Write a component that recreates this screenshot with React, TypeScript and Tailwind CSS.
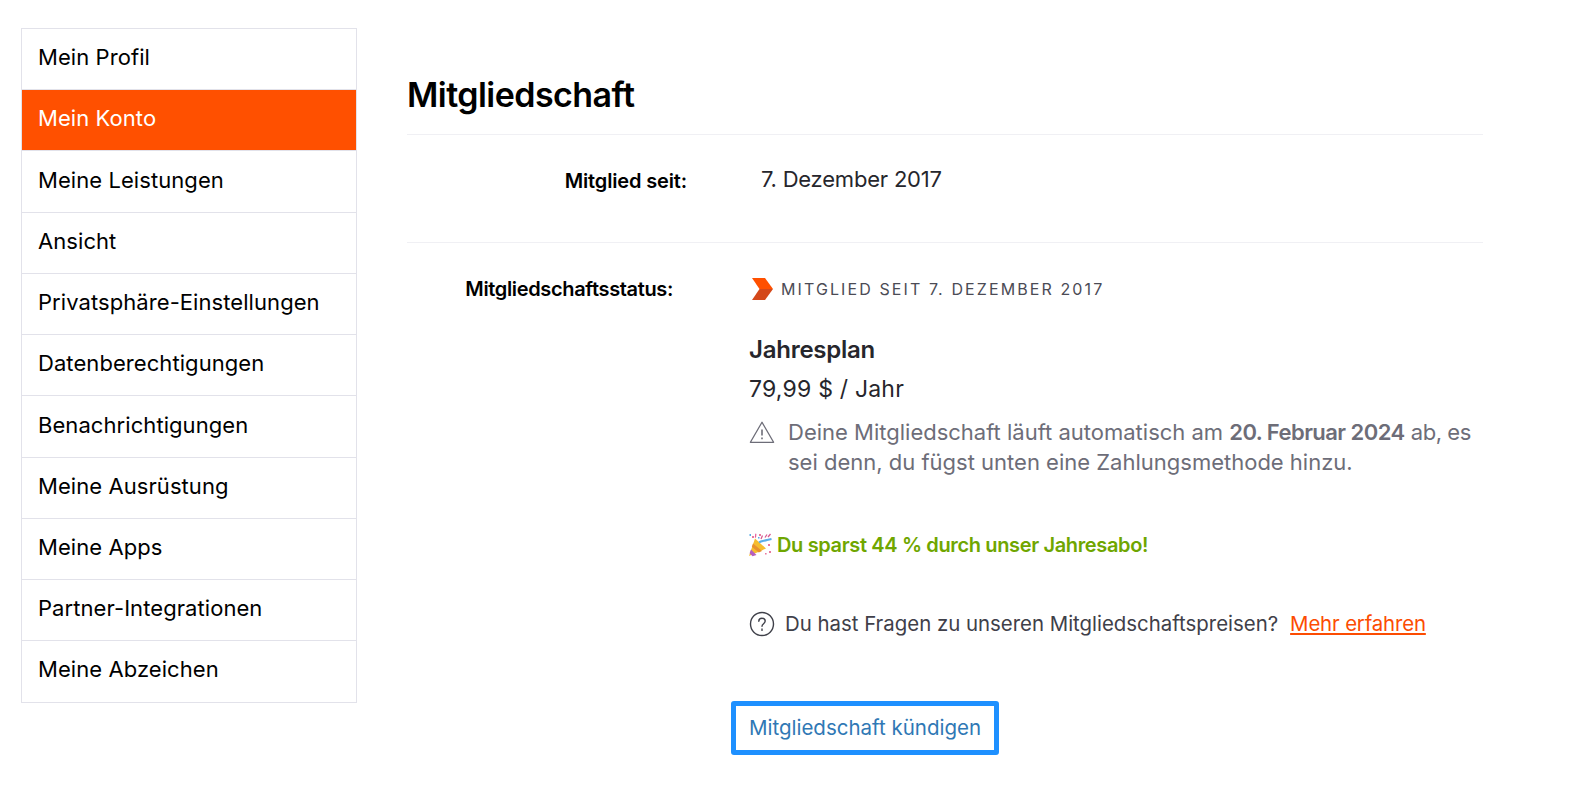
const items = ["Mein Profil","Mein Konto","Meine Leistungen","Ansicht","Privatsphäre-Einstellungen","Datenberechtigungen","Benachrichtigungen","Meine Ausrüstung","Meine Apps","Partner-Integrationen","Meine Abzeichen"];

function Chevron() {
  return (
    <svg width="21" height="22" viewBox="0 0 21 22" className="shrink-0">
      <path d="M0 0H13L21 11H7.5Z" fill="#ff5000" />
      <path d="M7.5 11H21L13 22H0Z" fill="#d4481a" />
    </svg>
  );
}

function Warn() {
  return (
    <svg width="26" height="24" viewBox="0 0 26 24" fill="none" className="shrink-0" stroke="#6d6d78" strokeWidth="1.3">
      <path d="M13 2.2L24.6 22.3H1.4Z" strokeLinejoin="round" />
      <path d="M13 9.5V15.5" strokeWidth="1.6" />
      <path d="M13 17.6V19.2" strokeWidth="1.6" />
    </svg>
  );
}

function Help() {
  return (
    <svg width="26" height="26" viewBox="0 0 26 26" fill="none" className="shrink-0" stroke="#3f4049" strokeWidth="1.4">
      <circle cx="13" cy="13" r="11.5" />
      <path d="M9.8 10.3c0-1.9 1.4-3 3.2-3s3.2 1.1 3.2 2.8c0 2.6-3.2 2.6-3.2 5.2" strokeLinecap="round" />
      <path d="M13 18v1.4" strokeLinecap="round" />
    </svg>
  );
}

function Party() {
  return (
    <svg width="24" height="24" viewBox="0 0 24 24" className="shrink-0">
      <path d="M1 23L7 5.5L18 15.5Z" fill="#f6bd2e" />
      <path d="M3 16.5L8.5 22L4.5 23.2L1.6 20.2Z" fill="#b45fc0" />
      <path d="M5 10.5L14 18L10.8 19.5L3.8 13.8Z" fill="#e8912e" />
      <path d="M11 9.5C13 7.5 16 8 19 7L23.5 6" stroke="#5aaee8" strokeWidth="2" fill="none" />
      <path d="M7 4.5C8.5 3.5 7 2.5 8 0.8" stroke="#e85a9a" strokeWidth="1.2" fill="none" />
      <path d="M13 6L14.5 2.5M17 4.5L19 1.5M20 4L22.5 1" stroke="#d85a90" strokeWidth="1.3" />
      <path d="M4 3h2v2H4zM11 1h2v2h-2zM20 11h2v2h-2zM21 18h2v2h-2zM17 20h1.6v1.6H17z" fill="#e9799f" />
      <path d="M1.5 1h1.5v2H1.5zM10 4h1.5v1.5H10z" fill="#5aaee8" />
    </svg>
  );
}

export default function App() {
  return (
    <div className="flex items-start min-h-[806px] bg-white pl-[21px] pt-[28px] font-['Inter',sans-serif]">
      <ul className="w-[336px] shrink-0 border border-[#e2e2ea] border-b-0">
        {items.map((t, i) => (
          <li
            key={t}
            className={`h-[61.24px] flex items-center pl-[16px] pb-[4px] text-[22px] leading-none tracking-[0.07px] border-b border-[#e2e2ea] ${i === 1 ? "bg-[#ff5000] text-white" : "text-black"}`}
          >
            {t}
          </li>
        ))}
      </ul>

      <main className="ml-[50px] w-[1076px] pt-[45px]">
        <h1 className="text-[34px] leading-[44px] font-semibold text-black tracking-[-0.55px] pb-[17px] border-b border-[#f0f0f4]">
          Mitgliedschaft
        </h1>

        <div className="flex h-[108px] pt-[29px] border-b border-[#f0f0f4]">
          <div className="w-[280px] pt-[2px] text-right text-[20px] leading-[30px] font-semibold text-black tracking-[-0.15px]">Mitglied seit:</div>
          <div className="ml-[74px] text-[22px] leading-[30px] text-[#26262c] tracking-[-0.2px]">7. Dezember 2017</div>
        </div>

        <div className="flex pt-[31px]">
          <div className="w-[266px] shrink-0 text-right text-[20px] leading-[30px] font-semibold text-black tracking-[-0.35px]">Mitgliedschaftsstatus:</div>
          <div className="ml-[76px] flex-1">
            <div className="flex items-center h-[30px] gap-[8px] pl-[3px] text-[16px] tracking-[2.1px] text-[#4b4b55]">
              <Chevron />
              <span>MITGLIED SEIT 7. DEZEMBER 2017</span>
            </div>
            <div className="mt-[30px] text-[24px] leading-[32px] font-semibold text-[#26262c] tracking-[-0.25px]">Jahresplan</div>
            <div className="mt-[7px] text-[23px] leading-[32px] text-[#26262c] tracking-[0.2px]">79,99 $ / Jahr</div>
            <div className="flex mt-[12px] gap-[13px] text-[22px] leading-[30px] text-[#6d6d78]">
              <div className="pt-[3px]"><Warn /></div>
              <p className="w-[700px]">
                Deine Mitgliedschaft läuft automatisch am <b className="font-semibold tracking-[-0.55px]">20. Februar 2024</b> <span className="tracking-[-0.45px]">ab, es</span> sei denn, du fügst unten eine Zahlungsmethode hinzu.
              </p>
            </div>
            <div className="flex items-center gap-[5px] -ml-[1px] mt-[53px] text-[20px] leading-[30px] font-semibold text-[#6fa600] tracking-[-0.36px]">
              <Party />
              <span>Du sparst 44 % durch unser Jahresabo!</span>
            </div>
            <div className="flex items-center mt-[49px] text-[20.4px] leading-[30px] text-[#3f4049]">
              <Help />
              <span className="ml-[10px]">Du hast Fragen zu unseren Mitgliedschaftspreisen?</span>
              <a href="#" className="ml-[12px] text-[#fc4c02] underline tracking-[-0.15px]">Mehr erfahren</a>
            </div>
            <div className="mt-[62px] -ml-[18px]">
              <button className="h-[54px] w-[268px] border-[5px] border-[#1e90ff] rounded-[3px] text-[20.5px] text-[#2f78b5] bg-white">
                Mitgliedschaft kündigen
              </button>
            </div>
          </div>
        </div>
      </main>
    </div>
  );
}
